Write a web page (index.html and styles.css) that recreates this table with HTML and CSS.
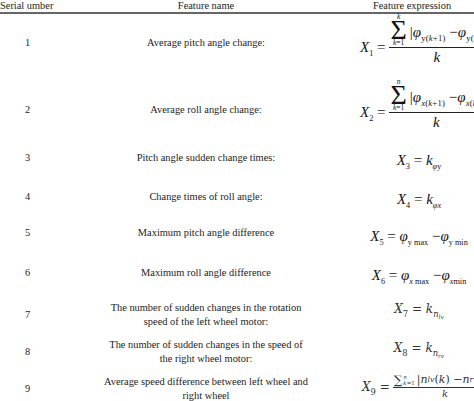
FILE: index.html
```html
<!DOCTYPE html>
<html>
<head>
<meta charset="utf-8">
<title>Feature table</title>
<link rel="stylesheet" href="styles.css">
</head>
<body>
<div class="sheet">
  <div class="head">
    <div class="h-sn">Serial umber</div>
    <div class="h-nm">Feature name</div>
    <div class="h-ex">Feature expression</div>
  </div>

  <div class="row r1">
    <div class="sn">1</div>
    <div class="nm">Average pitch angle change:</div>
    <div class="ex ex-left">
      <span class="lhs"><i>X</i><sub>1</sub> =</span>
      <span class="frac">
        <span class="numer">
          <span class="sum"><span class="lim"><i>k</i></span><span class="sig">Σ</span><span class="lim"><i>k</i>=1</span></span>
          <span class="term">|<i>φ</i><sub class="s2">y(<i>k</i>+1)</sub> −<i>φ</i><sub class="s2">y(<i>k</i>)</sub>|</span>
        </span>
        <span class="denom"><i>k</i></span>
      </span>
    </div>
  </div>

  <div class="row r2">
    <div class="sn">2</div>
    <div class="nm">Average roll angle change:</div>
    <div class="ex ex-left">
      <span class="lhs"><i>X</i><sub>2</sub> =</span>
      <span class="frac">
        <span class="numer">
          <span class="sum"><span class="lim"><i>n</i></span><span class="sig">Σ</span><span class="lim"><i>k</i>=1</span></span>
          <span class="term">|<i>φ</i><sub class="s2"><i>x</i>(<i>k</i>+1)</sub> −<i>φ</i><sub class="s2"><i>x</i>(<i>k</i>)</sub>|</span>
        </span>
        <span class="denom"><i>k</i></span>
      </span>
    </div>
  </div>

  <div class="row r3">
    <div class="sn">3</div>
    <div class="nm">Pitch angle sudden change times:</div>
    <div class="ex"><span><i>X</i><sub>3</sub> = <i>k</i><sub><i>φ</i>y</sub></span></div>
  </div>

  <div class="row r4">
    <div class="sn">4</div>
    <div class="nm">Change times of roll angle:</div>
    <div class="ex"><span><i>X</i><sub>4</sub> = <i>k</i><sub><i>φx</i></sub></span></div>
  </div>

  <div class="row r5">
    <div class="sn">5</div>
    <div class="nm">Maximum pitch angle difference</div>
    <div class="ex"><span><i>X</i><sub>5</sub> = <i>φ</i><sub>y max</sub> −<i>φ</i><sub>y min</sub></span></div>
  </div>

  <div class="row r6">
    <div class="sn">6</div>
    <div class="nm">Maximum roll angle difference</div>
    <div class="ex"><span><i>X</i><sub>6</sub> = <i>φ</i><sub><i>x</i> max</sub> −<i>φ</i><sub><i>x</i>min</sub></span></div>
  </div>

  <div class="row r7">
    <div class="sn">7</div>
    <div class="nm">The number of sudden changes in the rotation<br>speed of the left wheel motor:</div>
    <div class="ex cm"><span><i>X</i><sub>7</sub> = <i>k</i><sub><i>n</i><sub class="ss"><i>lv</i></sub></sub></span></div>
  </div>

  <div class="row r8">
    <div class="sn">8</div>
    <div class="nm">The number of sudden changes in the speed of<br>the right wheel motor:</div>
    <div class="ex cm"><span><i>X</i><sub>8</sub> = <i>k</i><sub><i>n</i><sub class="ss"><i>rv</i></sub></sub></span></div>
  </div>

  <div class="row r9">
    <div class="sn">9</div>
    <div class="nm">Average speed difference between left wheel and<br>right wheel</div>
    <div class="ex ex-left cm">
      <span class="lhs9"><i>X</i><sub>9</sub> =</span>
      <span class="frac">
        <span class="numer9"><span class="sig9">∑</span><span class="lims"><span><i>n</i></span><span><i>k</i>=1</span></span>|<i>n</i><sub><i>lv</i></sub>(<i>k</i>) − <i>n</i><sub><i>rv</i></sub>(<i>k</i>)|</span>
        <span class="denom9"><i>k</i></span>
      </span>
    </div>
  </div>
</div>
</body>
</html>
```

FILE: styles.css
```css
* { box-sizing: border-box; }
html, body { margin: 0; padding: 0; background: #ffffff; }
body {
  width: 474px;
  height: 401px;
  overflow: hidden;
  color: #1c1c1c;
  font-family: "Liberation Serif", "Times New Roman", serif;
}
.sheet { width: 481px; }

.head {
  display: grid;
  grid-template-columns: 55px 302px 124px;
  height: 14px;
  border-bottom: 2px solid #666666;
  font-size: 10.4px;
  line-height: 12px;
}
.h-sn { white-space: nowrap; }
.h-nm { text-align: center; }
.h-ex { text-align: center; padding-right: 14px; }

.row {
  display: grid;
  grid-template-columns: 55px 302px 124px;
  align-items: center;
  font-size: 10.4px;
  line-height: 14.5px;
}
.sn { text-align: center; }
.nm { text-align: center; white-space: nowrap; }

.r1 { height: 54px; margin-top: 2px; }
.r2 { height: 58px; margin-top: 11px; }
.r3 { height: 20px; margin-top: 9px; }
.r4 { height: 20px; margin-top: 19px; }
.r5 { height: 20px; margin-top: 16px; }
.r6 { height: 20px; margin-top: 20px; }
.r7 { height: 30px; margin-top: 17px; }
.r8 { height: 30px; margin-top: 7px; }
.r9 { height: 30px; margin-top: 7px; }

.ex {
  display: flex;
  justify-content: center;
  align-items: flex-start;
  white-space: nowrap;
  font-size: 15px;
  line-height: 16px;
  color: #141414;
}
.ex-left { justify-content: flex-start; padding-left: 3px; }

.r1 .ex, .r2 .ex { align-self: start; margin-top: -3px; }
.r3 .ex, .r4 .ex, .r6 .ex { margin-top: 4px; }
.r5 .ex { margin-top: 5px; }
.r7 .ex { align-self: start; margin-top: 2px; }
.r8 .ex { align-self: start; margin-top: 4px; }
.r9 .ex { align-self: start; margin-top: -1px; padding-left: 5px; }

i { font-style: italic; }
sub {
  font-size: 0.55em;
  line-height: 0;
  vertical-align: -0.45em;
}
sub.s2 { font-size: 0.58em; letter-spacing: 0.2px; }
sub .ss, sub sub { font-size: 0.9em; vertical-align: -0.3em; }

.lhs { margin-top: 26px; margin-right: 3px; }

.frac {
  display: inline-flex;
  flex-direction: column;
  align-items: center;
}
.numer {
  display: flex;
  align-items: center;
  height: 35px;
  padding: 0 1px 1px 2px;
  border-bottom: 1px solid #222222;
}
.sum {
  display: flex;
  flex-direction: column;
  align-items: center;
  margin-right: 3px;
}
.lim { font-size: 7.5px; line-height: 8px; }
.sig { font-size: 28px; line-height: 18px; }
.term { line-height: 16px; margin-top: 4px; }
.denom { height: 16px; line-height: 16px; padding-top: 1px; }

.cm {
  font-family: "DejaVu Serif", "Liberation Serif", serif;
  font-size: 12px;
  line-height: 14px;
  color: #333333;
}
.cm sub { font-size: 0.7em; }
.lhs9 { margin-top: 7px; margin-right: 3px; }
.numer9 {
  display: flex;
  align-items: center;
  height: 15px;
  padding: 0 1px 1px 1px;
  border-bottom: 1px solid #333333;
  font-size: 11px;
}
.sig9 { font-size: 12px; }
.lims {
  display: inline-flex;
  flex-direction: column;
  font-size: 5.5px;
  line-height: 6px;
  margin: 0 2px 0 1px;
}
.denom9 { height: 12px; line-height: 12px; font-size: 10px; }
```
